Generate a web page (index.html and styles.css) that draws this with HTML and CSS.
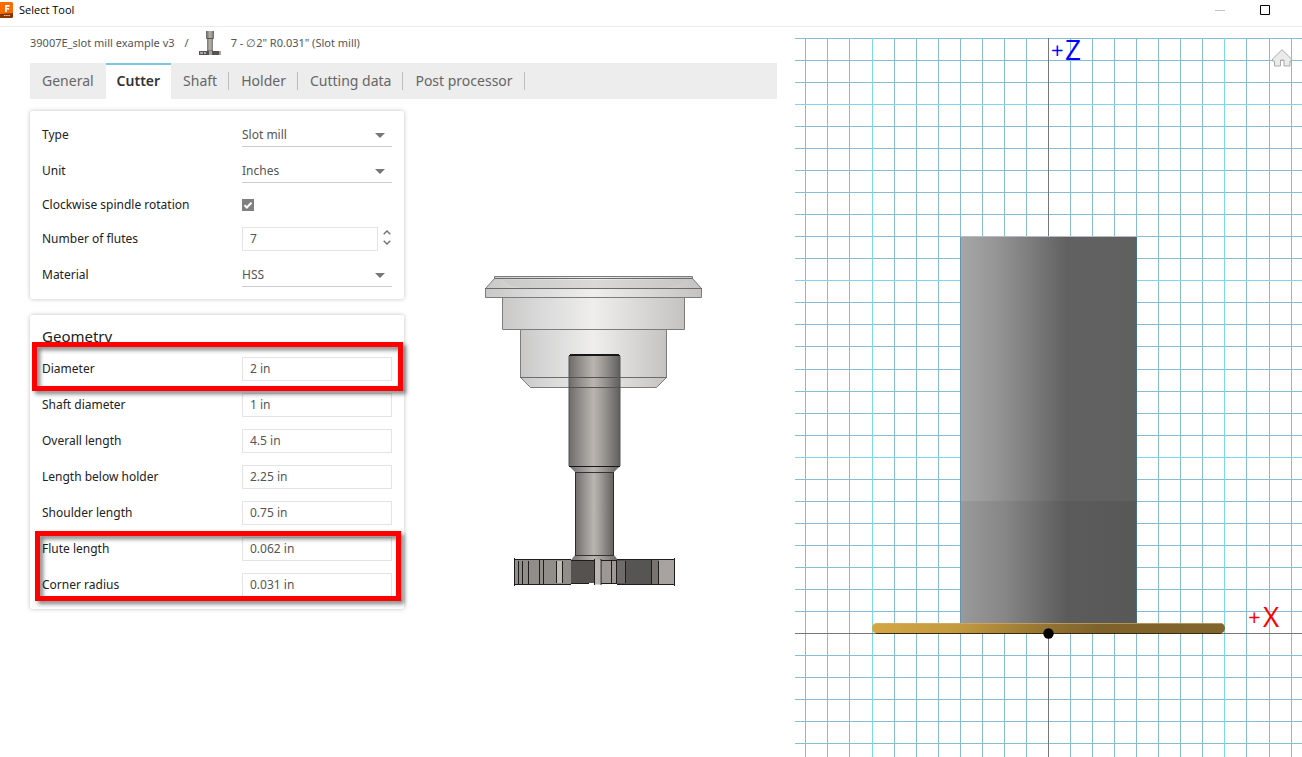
FILE: index.html
```html
<!DOCTYPE html>
<html lang="en">
<head>
<meta charset="utf-8">
<title>Select Tool</title>
<link rel="stylesheet" href="styles.css">
</head>
<body>
<header class="titlebar">
  <svg class="app-icon" width="13" height="16" viewBox="0 0 13 16" aria-hidden="true">
    <path d="M0 0h12l1 1v14l-1 1H0z" fill="#ff6b00"/>
    <path d="M0 12l13-1v4l-1 1H0z" fill="#8b3503"/>
    <path d="M5 3h4.500v1.700H6.800v1.300h2.300v1.600H6.800V10H5z" fill="#fff"/>
    <path d="M4 13.500h1.500M6.200 13.500h1.500M8.400 13.500h1.500" stroke="#e8d0c0"/>
  </svg>
  <h1 class="window-title">Select Tool</h1>
  <div class="window-controls">
    <button class="window-button" aria-label="Minimize"><svg width="10" height="10"><path d="M0 5.500h10" stroke="#c4c4c4"/></svg></button>
    <button class="window-button" aria-label="Maximize"><svg width="10" height="10"><path d="M.5.5h9v9h-9z" fill="none" stroke="#000"/></svg></button>
  </div>
</header>
<main class="workspace">
  <section class="editor">
    <div class="breadcrumb">
      <span>39007E_slot mill example v3</span>
      <span>/</span>
      <svg width="22" height="24" viewBox="0 0 22 24" aria-hidden="true">
        <defs><linearGradient id="mini"><stop offset="0" stop-color="#66625f"/><stop offset=".5" stop-color="#b9b4ae"/><stop offset="1" stop-color="#6d6966"/></linearGradient></defs>
        <path d="M7 0h8v7l-1 1v12H8V8L7 7z" fill="url(#mini)"/>
        <path d="M7.500 7.500h7M8 20h6" stroke="#555"/>
        <path d="M0 20h22v4H0z" fill="#56524f"/>
        <path d="M1 21h3v2H1zM5 21h2v2H5zM10 20h3v4h-3zM20 20h2v4h-2z" fill="#aaa5a0"/>
      </svg>
      <span>7 - ∅2" R0.031" (Slot mill)</span>
    </div>
    <nav class="tabs">
      <button class="tab">General</button>
      <button class="tab tab-active">Cutter</button>
      <button class="tab tab-divided">Shaft</button>
      <button class="tab tab-divided">Holder</button>
      <button class="tab tab-divided">Cutting data</button>
      <button class="tab tab-divided">Post processor</button>
    </nav>
    <div class="content">
      <form class="panels">
        <div class="card">
          <div class="row"><label for="type">Type</label><div class="select"><select id="type"><option>Slot mill</option></select></div></div>
          <div class="row"><label for="unit">Unit</label><div class="select"><select id="unit"><option>Inches</option></select></div></div>
          <div class="row row-check"><label for="clockwise">Clockwise spindle rotation</label>
            <span class="check"><input type="checkbox" id="clockwise" checked><svg width="12" height="12" aria-hidden="true"><path d="M2.500 6.200l2.400 2.300 4.600-4.900" fill="none" stroke="#fff" stroke-width="2"/></svg></span></div>
          <div class="row"><label for="flutes">Number of flutes</label>
            <div class="stepper"><input class="field" type="text" id="flutes" value="7">
              <div class="steps">
                <button type="button" class="step" aria-label="Increase"><svg width="8" height="5"><path d="M.7 4.300L4 1l3.300 3.300" fill="none" stroke="#777" stroke-width="1.500"/></svg></button>
                <button type="button" class="step" aria-label="Decrease"><svg width="8" height="5"><path d="M.7.700L4 4 7.300.700" fill="none" stroke="#777" stroke-width="1.500"/></svg></button>
              </div></div></div>
          <div class="row"><label for="material">Material</label><div class="select"><select id="material"><option>HSS</option></select></div></div>
        </div>
        <div class="card">
          <h2 class="card-title">Geometry</h2>
          <div class="row"><label for="diameter">Diameter</label><input class="field" type="text" id="diameter" value="2 in"></div>
          <div class="row"><label for="shaft">Shaft diameter</label><input class="field" type="text" id="shaft" value="1 in"></div>
          <div class="row"><label for="overall">Overall length</label><input class="field" type="text" id="overall" value="4.5 in"></div>
          <div class="row"><label for="below">Length below holder</label><input class="field" type="text" id="below" value="2.25 in"></div>
          <div class="row"><label for="shoulder">Shoulder length</label><input class="field" type="text" id="shoulder" value="0.75 in"></div>
          <div class="row"><label for="flute">Flute length</label><input class="field" type="text" id="flute" value="0.062 in"></div>
          <div class="row"><label for="corner">Corner radius</label><input class="field" type="text" id="corner" value="0.031 in"></div>
          <div class="mark mark-diameter"></div>
          <div class="mark mark-flute"></div>
        </div>
      </form>
      <div class="preview">
        <svg width="218" height="312" viewBox="485 275 218 312" role="img" aria-label="Slot mill in holder">
          <defs>
            <linearGradient id="holder"><stop offset="0" stop-color="#c9c8c7"/><stop offset=".15" stop-color="#d5d5d5"/><stop offset=".5" stop-color="#efeeed"/><stop offset=".75" stop-color="#dad9d8"/><stop offset="1" stop-color="#c5c3c1"/></linearGradient>
            <linearGradient id="steel"><stop offset="0" stop-color="#6e6c6a"/><stop offset=".25" stop-color="#979390"/><stop offset=".48" stop-color="#bab5b0"/><stop offset=".65" stop-color="#a09c98"/><stop offset="1" stop-color="#605f5e"/></linearGradient>
          </defs>
          <g stroke="#7c7c7c" fill="url(#holder)">
            <path d="M494.500 276.500h198v2l9 10v9h-216v-9l9-10z"/>
            <path d="M502.500 297.500h182v32h-182z"/>
            <path d="M520.500 329.500h146v48l-10 10h-126l-10-10z"/>
          </g>
          <path d="M503 280c6 6 14 8 24 8h134c10 0 18-2 24-8z" fill="#c4c3c2" opacity=".5"/>
          <path d="M494 278.500h199M485 288.500h217M520 377.500h147" stroke="#6b6b6b"/>
          <path d="M575 471h39v86h-39z" fill="url(#steel)"/>
          <path d="M575.500 471v86M613.500 471v86" stroke="#2b2b2b"/>
          <path d="M569 466h51l-6 6h-39zM575 555h39l4 5h-47z" fill="url(#steel)"/>
          <path d="M575 472.500h39M575 555.500h39" stroke="#333"/>
          <path d="M569 356h51v110h-51z" fill="url(#steel)"/>
          <path d="M569 356v110M620 356v110" stroke="#555"/>
          <path d="M569 355.500h51M570 354.500h49M569 466.500h51" stroke="#171717"/>
          <path d="M569 377.500h51M569 387.500h51" stroke="#55524f"/>
          <g stroke="none">
            <path d="M514 559h57v26h-57z" fill="#918d89"/>
            <path d="M571 561h24v22h-24z" fill="#56524f"/>
            <path d="M601 561h16v22h-16z" fill="#9d9893"/>
            <path d="M617 559h36v26h-36z" fill="#565553"/>
            <path d="M617 561h9v22h-9z" fill="#6f6b68"/>
            <path d="M651 559h9v26h-9z" fill="#77736f"/>
            <path d="M659 559h16v26h-16z" fill="#a8a39e"/>
            <path d="M556 561h7v22h-7z" fill="#c0bbb5"/>
            <path d="M594.500 559.500h6v25h-6z" fill="#bbb5af"/>
          </g>
          <path d="M514.500 558v28M674.500 558v28M514 559.500h57M514 584.500h57M617 559.500h58M617 584.500h58M543.500 560v24M556.500 561v22M562.500 561v22M594.500 559v26M601 559v26M611.500 561v22M616.500 560v24M625.500 561v22M651.500 559v26M658.500 561v23M518.500 561v23M522.500 561v23M528.500 561v23M539.500 559v25M571 560.500h24M601 560.500h16M571 583.500h18M601 583.500h16" stroke="#1e1d1c" fill="none"/>
        </svg>
      </div>
    </div>
  </section>
  <section class="viewer">
    <svg class="viewport" viewBox="795 38 507 719" preserveAspectRatio="xMidYMin slice" role="img" aria-label="Tool profile">
      <defs>
        <linearGradient id="shank"><stop offset="0" stop-color="#a6a6a6"/><stop offset=".2" stop-color="#959595"/><stop offset=".4" stop-color="#7c7c7c"/><stop offset=".6" stop-color="#616161"/><stop offset="1" stop-color="#606060"/></linearGradient>
        <linearGradient id="shank-low"><stop offset="0" stop-color="#9a9a9a"/><stop offset=".25" stop-color="#868686"/><stop offset=".6" stop-color="#5b5b5b"/><stop offset="1" stop-color="#585858"/></linearGradient>
        <linearGradient id="brass" x1="0" y1="0" x2="1" y2=".02"><stop offset="0" stop-color="#d4a745"/><stop offset=".25" stop-color="#c39a40"/><stop offset=".5" stop-color="#947432"/><stop offset=".65" stop-color="#7e622a"/><stop offset="1" stop-color="#80652c"/></linearGradient>
      </defs>
      <path class="grid-line" d="M805.500 38v719M827.500 38v719M849.500 38v719M894.500 38v719M916.500 38v719M938.500 38v719M960.500 38v719M982.500 38v719M1004.500 38v719M1026.500 38v719M1070.500 38v719M1092.500 38v719M1114.500 38v719M1136.500 38v719M1158.500 38v719M1180.500 38v719M1202.500 38v719M1246.500 38v719M1269.500 38v719M1291.500 38v719"/>
      <path class="grid-line" d="M795 38.500h507M795 60.500h507M795 82.500h507M795 126.500h507M795 148.500h507M795 170.500h507M795 192.500h507M795 214.500h507M795 236.500h507M795 258.500h507M795 302.500h507M795 324.500h507M795 346.500h507M795 369.500h507M795 391.500h507M795 413.500h507M795 435.500h507M795 479.500h507M795 501.500h507M795 523.500h507M795 545.500h507M795 567.500h507M795 589.500h507M795 611.500h507M795 655.500h507M795 677.500h507M795 699.500h507M795 721.500h507M795 743.500h507"/>
      <path class="grid-major" d="M872.500 38v719M1224.500 38v719M795 104.500h507M795 280.500h507M795 457.500h507"/>
      <path class="axis" d="M1048.500 38v719M795 633.500h507"/>
      <path d="M961 237h176v264H961z" fill="url(#shank)"/>
      <path d="M961 501h176v122H961z" fill="url(#shank-low)"/>
      <path d="M960.500 237v386" stroke="#6396aa"/>
      <path d="M1136.500 237v386" stroke="#447080"/>
      <path d="M961 236.500h176" stroke="#b5bcbf"/>
      <rect x="872" y="623" width="353" height="10.500" rx="5" fill="url(#brass)"/>
      <path d="M876 623.500h345" stroke="#d1b77b" opacity=".6"/>
      <path d="M876 633.500h345" stroke="#3a2a10"/>
      <circle cx="1048.500" cy="633.500" r="5.200"/>
      <text class="axis-label axis-z"><tspan class="axis-sign" x="1051" y="58">+</tspan><tspan x="1065" y="60">Z</tspan></text>
      <text class="axis-label axis-x"><tspan class="axis-sign" x="1248" y="625">+</tspan><tspan x="1263" y="627">X</tspan></text>
    </svg>
    <button class="home" aria-label="Home view"><svg width="20" height="18" viewBox="0 0 20 18"><path d="M10 .7L19.500 10v2H18v5h-6v-6H8.500v6h-6v-5H.5v-2z" fill="#ebebeb" stroke="#aaa"/></svg></button>
  </section>
</main>
</body>
</html>
```
FILE: styles.css
```css
* { box-sizing: border-box; }
body {
  margin: 0;
  min-height: 100vh;
  display: flex;
  flex-direction: column;
  background: #fff;
  color: #222;
  font: 12px/16px "Noto Sans", "Open Sans", sans-serif;
}
button, input, select { font: inherit; color: inherit; }
button { border: 0; padding: 0; background: none; }
svg { display: block; }

.titlebar {
  display: flex;
  align-items: center;
  height: 27px;
  padding: 0 31px 6px 0;
  border-bottom: 1px solid #ebebeb;
}
.window-title {
  margin: 0 0 0 6px;
  font: 400 11px/16px "Open Sans", sans-serif;
  color: #000;
}
.window-controls { display: flex; gap: 33px; margin-left: auto; }
.window-button { width: 12px; height: 12px; display: grid; place-items: center; }

.workspace {
  flex: 1;
  display: grid;
  grid-template-columns: minmax(0, 795fr) minmax(0, 507fr);
}
.editor {
  display: flex;
  flex-direction: column;
  padding: 4px 18px 0 30px;
}
.breadcrumb {
  display: flex;
  align-items: center;
  gap: 10px;
  height: 24px;
  margin-bottom: 8px;
  font-size: 11px;
  color: #555;
}
.tabs {
  display: flex;
  height: 36px;
  background: #ededed;
}
.tab {
  position: relative;
  padding: 0 12px 2px;
  border-top: 2px solid transparent;
  font-size: 14px;
  color: #666;
}
.tab-active {
  padding: 0 11px 2px;
  border-top-color: #7bc5e2;
  background: #fff;
  color: #333;
  font-weight: 600;
}
.tab-divided::after {
  content: "";
  position: absolute;
  right: 0;
  top: 7px;
  width: 1px;
  height: 18px;
  background: #bdbdbd;
}
.content { flex: 1; display: flex; gap: 6px; }
.panels {
  flex: none;
  display: flex;
  flex-direction: column;
  gap: 16px;
  padding: 12px 0;
}
.card {
  position: relative;
  padding: 6px 12px;
  border-radius: 2px;
  box-shadow: 0 0 4px rgba(0, 0, 0, .25);
}
.card-title { margin: 0; font-size: 15px; font-weight: 400; line-height: 30px; }
.row {
  display: grid;
  grid-template-columns: 200px 150px;
  align-items: center;
  height: 36px;
}
.row-check { height: 32px; }
.field {
  width: 100%;
  min-width: 0;
  height: 24px;
  padding: 0 7px 1px;
  border: 1px solid #e3e3e3;
  background: #fff;
  color: #555;
}
.select { display: grid; align-items: center; }
.select select {
  grid-area: 1 / 1;
  appearance: none;
  height: 24px;
  padding: 0;
  border: 0;
  border-bottom: 1px solid #ccc;
  border-radius: 0;
  background: none;
  color: #555;
}
.select::after {
  content: "";
  grid-area: 1 / 1;
  justify-self: end;
  margin-right: 7px;
  border: 5px solid transparent;
  border-top-color: #777;
  border-bottom: 0;
  pointer-events: none;
}
.check { display: grid; justify-content: start; }
.check input {
  grid-area: 1 / 1;
  appearance: none;
  width: 12px;
  height: 12px;
  margin: 0;
  background: #808080;
}
.check svg { grid-area: 1 / 1; z-index: 1; pointer-events: none; }
.stepper { display: flex; gap: 5px; }
.steps { display: flex; flex-direction: column; gap: 5px; padding-top: 3px; }
.step { display: block; width: 9px; height: 5px; }

.mark {
  position: absolute;
  border: 5px solid #f00;
  filter: drop-shadow(3px 3px 2px rgba(0, 0, 0, .5));
  pointer-events: none;
}
.mark-diameter { top: 27px; left: 2px; right: 1px; height: 49px; }
.mark-flute { bottom: 8px; left: 5px; right: 3px; height: 70px; }

.preview {
  flex: 1;
  display: flex;
  align-items: center;
  justify-content: center;
  padding-top: 6px;
}
.viewer { position: relative; padding-top: 11px; overflow: hidden; }
.viewport { width: 100%; height: 100%; overflow: visible; }
.grid-line { stroke: #86bdd3; }
.grid-major { stroke: #7cd8ec; }
.axis { stroke: #777; }
.axis-label { font: 400 28px "Open Sans", sans-serif; }
.axis-sign { font-size: 22px; }
.axis-z { fill: #00f; }
.axis-x { fill: #f00; }
.home { position: absolute; top: 22px; right: 10px; }
```
